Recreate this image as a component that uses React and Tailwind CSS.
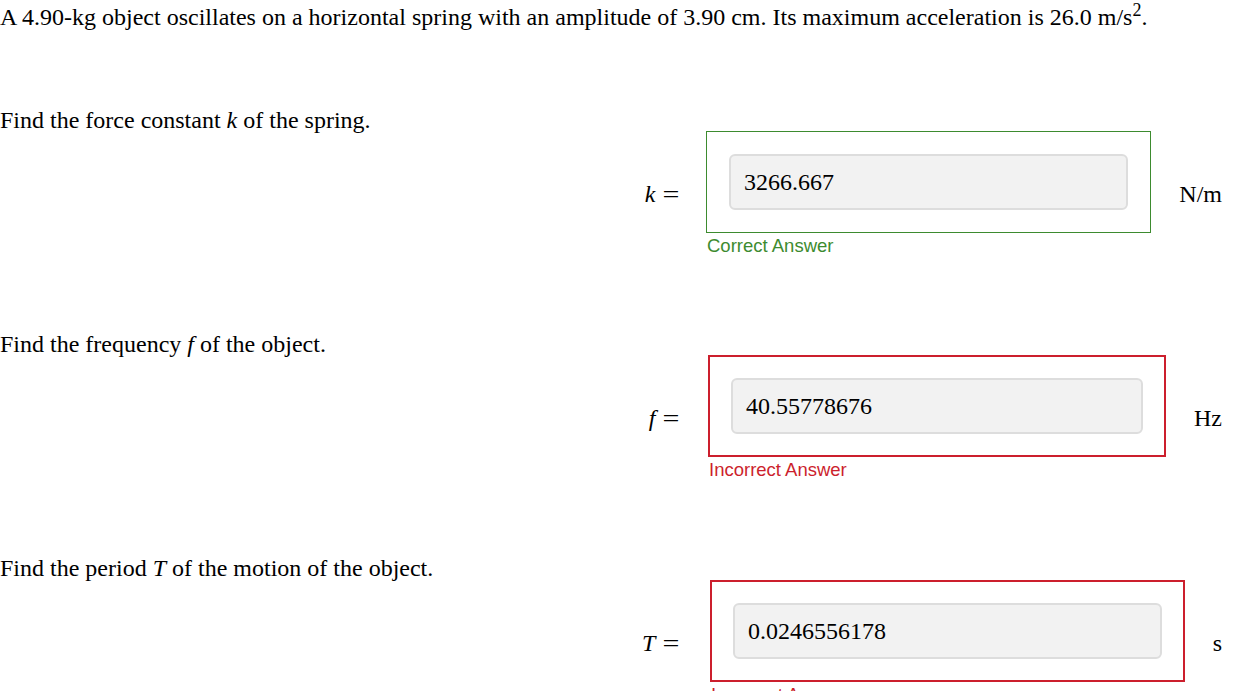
const ROWS = [
  {
    question: (
      <>
        Find the force constant <i>k</i> of the spring.
      </>
    ),
    variable: 'k',
    value: '3266.667',
    unit: 'N/m',
    correct: true,
    cellClass: 'ml-[26px]',
    boxClass: 'w-[445px] border border-[#3d8b2f] p-[22px]',
    questionClass: 'mt-[79px] -mb-px',
  },
  {
    question: (
      <>
        Find the frequency <i>f</i> of the object.
      </>
    ),
    variable: 'f',
    value: '40.55778676',
    unit: 'Hz',
    correct: false,
    cellClass: 'ml-[28px]',
    boxClass: 'w-[458px] border-2 border-[#cc1f2d] p-[21px]',
    questionClass: 'mt-[75px] -mb-px',
  },
  {
    question: (
      <>
        Find the period <i>T</i> of the motion of the object.
      </>
    ),
    variable: 'T',
    value: '0.0246556178',
    unit: 's',
    correct: false,
    cellClass: 'ml-[30px]',
    boxClass: 'w-[475px] border-2 border-[#cc1f2d] p-[21px]',
    questionClass: 'mt-[75px]',
  },
];

function AnswerRow({ row }) {
  return (
    <div>
      <p className={`h-[24px] leading-[24px] ${row.questionClass}`}>{row.question}</p>
      <div className="flex items-center">
        <div className="w-[680px] shrink-0 text-right">
          <i>{row.variable}</i>
          <span className="ml-[11px] inline-block scale-x-125 origin-right">=</span>
        </div>
        <div className={`shrink-0 ${row.cellClass}`}>
          <div className={row.boxClass}>
            <div className="flex h-[56px] items-center rounded-[6px] border-2 border-[#dddddd] bg-[#f2f2f2] pl-[13px]">
              {row.value}
            </div>
          </div>
          <div
            className={`mt-[2px] h-[22px] pl-px font-['Liberation_Sans',_Arial,_sans-serif] text-[18.5px] leading-[22px] ${
              row.correct ? 'text-[#3d8b2f]' : 'text-[#cc1f2d]'
            }`}
          >
            {row.correct ? 'Correct Answer' : 'Incorrect Answer'}
          </div>
        </div>
        <div className="flex-1 pr-[12px] text-right">{row.unit}</div>
      </div>
    </div>
  );
}

export default function App() {
  return (
    <div className="h-[691px] overflow-hidden bg-white font-['Liberation_Serif',_'Times_New_Roman',_serif] text-[24px] text-black">
      <p className="mt-[5px] h-[24px] leading-[24px]">
        A 4.90-kg object oscillates on a horizontal spring with an amplitude of 3.90 cm. Its maximum acceleration is
        26.0 m/s<sup>2</sup>.
      </p>
      {ROWS.map((row) => (
        <AnswerRow key={row.variable} row={row} />
      ))}
    </div>
  );
}
